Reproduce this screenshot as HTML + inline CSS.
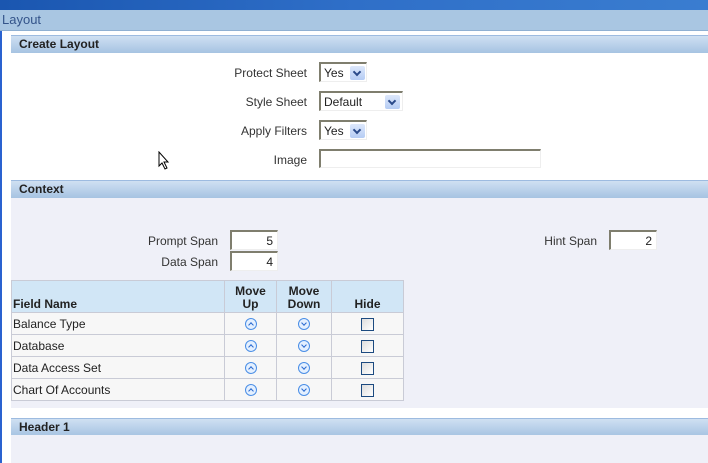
<!DOCTYPE html>
<html><head><meta charset="utf-8"><style>
*{margin:0;padding:0;box-sizing:border-box}
body{width:708px;height:463px;overflow:hidden;background:#fff;font-family:"Liberation Sans",sans-serif;font-size:12px;color:#222;position:relative}
.a{position:absolute}
.top{left:0;top:0;width:708px;height:10px;background:linear-gradient(90deg,#1a56b0,#2f6fc8 50%,#3a7dd0)}
.lay{left:0;top:10px;width:708px;height:21px;background:#a9c6e2;border-bottom:1px solid #8fb0d2;color:#34548a;font-size:13px;line-height:20px;padding-left:2px}
.edge{left:0;top:31px;width:2px;height:432px;background:#2a62d0}
.sh{left:11px;width:697px;height:18px;background:linear-gradient(#cfe0f2,#a6c3e2);border-top:1px solid #9dbbe0;font-weight:bold;font-size:12px;line-height:17px;padding-left:8px;color:#222}
.lbl{text-align:right;color:#333}
.in{background:#fff;border-top:2px solid #7f7e6e;border-left:2px solid #7f7e6e;border-right:1px solid #eee;border-bottom:1px solid #eee}
.sel .b{position:absolute;top:2px;width:15px;height:14px;background:linear-gradient(#dde8fb,#b5ccf4);border-radius:2px}
.sel .b:after{content:"";position:absolute;left:4px;top:3px;width:4px;height:4px;border-right:2px solid #2a4a8a;border-bottom:2px solid #2a4a8a;transform:rotate(45deg)}
.sel span{position:absolute;left:3px;top:2px;font-size:12px}
.ctx{left:11px;top:198px;width:697px;height:210px;background:#eff0f8}
.ctx2{left:11px;top:435px;width:697px;height:28px;background:#eff0f8}
table{position:absolute;left:11px;top:280px;border-collapse:collapse;font-size:12px}
td,th{border:1px solid #c9cbd6;padding:0 1px;height:22px}
th{background:#d1e6f6;font-weight:bold;line-height:13px;vertical-align:bottom;padding-bottom:1px;text-align:center}
td{background:#f7f7f7}
.ic{display:inline-block;width:12px;height:12px;border:1px solid #4a8ee6;border-radius:50%;background:#e4f0ff;position:relative;vertical-align:middle}
.ic:after{content:"";position:absolute;left:3px;width:3px;height:3px;border-left:1.5px solid #2a6ad0;border-top:1.5px solid #2a6ad0}
.up:after{top:4px;transform:rotate(45deg)}
.dn:after{top:2px;transform:rotate(225deg)}
.cb{display:inline-block;width:13px;height:13px;border:1px solid #1c4a80;background:linear-gradient(135deg,#ddd,#fff);vertical-align:middle}
</style></head><body>
<div class="a top"></div>
<div class="a lay">Layout</div>
<div class="a edge"></div>
<div class="a sh" style="top:35px">Create Layout</div>
<div class="a lbl" style="left:150px;top:66px;width:157px">Protect Sheet</div>
<div class="a in sel" style="left:319px;top:62px;width:48px;height:20px"><span>Yes</span><div class="b" style="left:29px"></div></div>
<div class="a lbl" style="left:150px;top:95px;width:157px">Style Sheet</div>
<div class="a in sel" style="left:319px;top:91px;width:84px;height:20px"><span>Default</span><div class="b" style="left:64px"></div></div>
<div class="a lbl" style="left:150px;top:124px;width:157px">Apply Filters</div>
<div class="a in sel" style="left:319px;top:120px;width:48px;height:20px"><span>Yes</span><div class="b" style="left:29px"></div></div>
<div class="a lbl" style="left:150px;top:153px;width:157px">Image</div>
<div class="a in" style="left:319px;top:149px;width:222px;height:19px"></div>
<svg class="a" style="left:158px;top:151px" width="12" height="20" viewBox="0 0 12 20"><path d="M1 1 L1 15 L4 12 L7 18 L9 17 L6 11 L10 11 Z" fill="#fff" stroke="#000" stroke-width="1"/></svg>
<div class="a sh" style="top:180px">Context</div>
<div class="a ctx"></div>
<div class="a lbl" style="left:100px;top:234px;width:118px">Prompt Span</div>
<div class="a in" style="left:230px;top:230px;width:48px;height:20px;text-align:right;padding:2px 4px 0 0">5</div>
<div class="a lbl" style="left:100px;top:255px;width:118px">Data Span</div>
<div class="a in" style="left:230px;top:251px;width:48px;height:20px;text-align:right;padding:2px 4px 0 0">4</div>
<div class="a lbl" style="left:480px;top:234px;width:117px">Hint Span</div>
<div class="a in" style="left:609px;top:230px;width:48px;height:20px;text-align:right;padding:2px 4px 0 0">2</div>
<table>
<tr><th style="width:213px;text-align:left;height:32px">Field Name</th><th style="width:52px">Move<br>Up</th><th style="width:55px">Move<br>Down</th><th style="width:72px">Hide</th></tr>
<tr><td>Balance Type</td><td align="center"><span class="ic up"></span></td><td align="center"><span class="ic dn"></span></td><td align="center"><span class="cb"></span></td></tr>
<tr><td>Database</td><td align="center"><span class="ic up"></span></td><td align="center"><span class="ic dn"></span></td><td align="center"><span class="cb"></span></td></tr>
<tr><td>Data Access Set</td><td align="center"><span class="ic up"></span></td><td align="center"><span class="ic dn"></span></td><td align="center"><span class="cb"></span></td></tr>
<tr><td>Chart Of Accounts</td><td align="center"><span class="ic up"></span></td><td align="center"><span class="ic dn"></span></td><td align="center"><span class="cb"></span></td></tr>
</table>
<div class="a sh" style="top:418px">Header 1</div>
<div class="a ctx2"></div>
</body></html>
